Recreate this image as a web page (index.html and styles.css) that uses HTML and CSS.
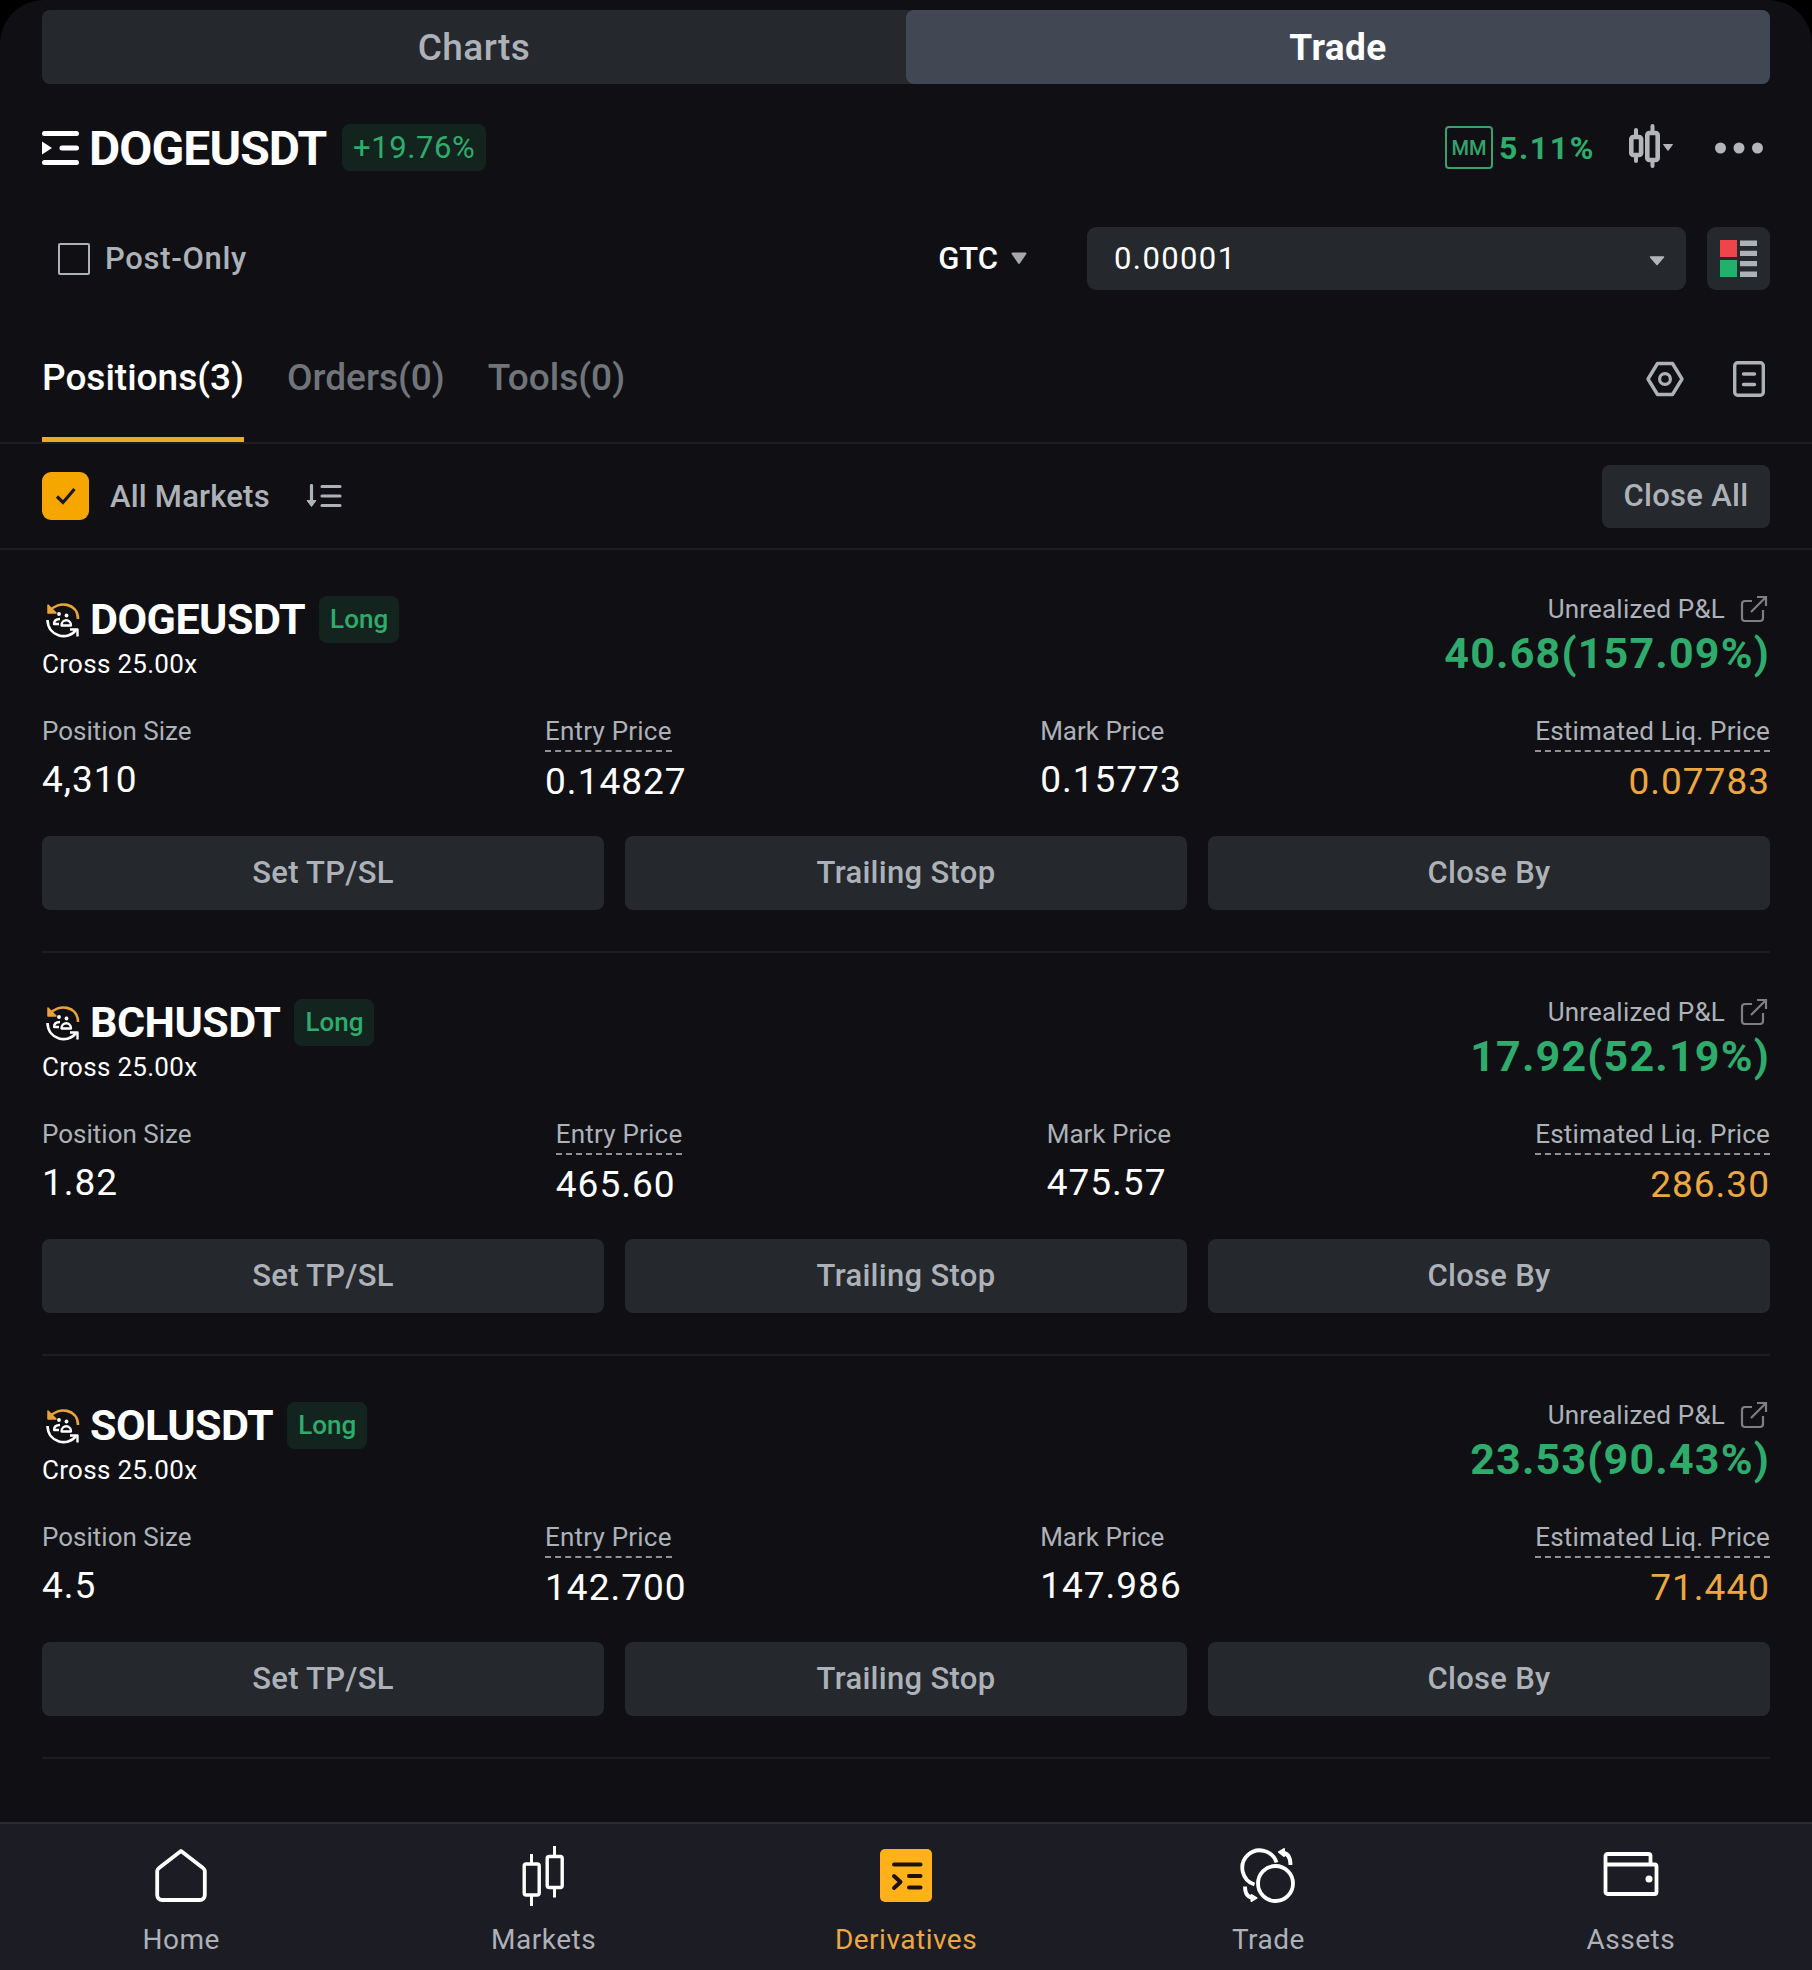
FILE: index.html
```html
<!DOCTYPE html>
<html lang="en">
<head>
  <meta charset="UTF-8">
  <meta name="viewport" content="width=device-width, initial-scale=1.0">
  <title>Derivatives</title>
  <link rel="stylesheet" href="styles.css">
</head>
<body>

<!-- Shared icons -->
<svg class="sprite">
  <symbol id="icon-cross" viewBox="0 0 34 36">
    <path d="M4 9C12-2 32 1 32 17" fill="none" stroke="#e8a33d" stroke-width="2.6"/>
    <path d="M2 3v8h8z" fill="#e8a33d" stroke="#e8a33d" stroke-width="1.5" stroke-linejoin="round"/>
    <path d="M1.500 18C2 35 22 39 30 28" fill="none" stroke="#fff" stroke-width="2.600"/>
    <path d="M24 27.500h7.500v7" fill="none" stroke="#fff" stroke-width="2.400" stroke-linejoin="round"/>
    <circle cx="13" cy="12" r="1.900" fill="#fff"/>
    <circle cx="20.500" cy="13.500" r="1.900" fill="#fff"/>
    <path d="M14 17c-4 0-6 2-6 5h5M15.500 23.500c0-7 9.500-7 9.500 0z" fill="none" stroke="#fff" stroke-width="2.300" stroke-linejoin="round"/>
  </symbol>
  <symbol id="icon-share" viewBox="0 0 28 28">
    <path d="M12 6H5a3 3 0 0 0-3 3v14a3 3 0 0 0 3 3h15a3 3 0 0 0 3-3v-8M11 17L26 2M17 2h9v9" fill="none" stroke="#7d7f83" stroke-width="2.200"/>
  </symbol>
</svg>

<div class="app">
  <div class="view-switch">
    <div class="view">Charts</div>
    <div class="view active">Trade</div>
  </div>

  <!-- Symbol header -->
  <div class="symbol-bar">
    <svg class="menu-icon" viewBox="0 0 37 36" width="37" height="36">
      <path d="M2.500 3.500h32M20 18h14.500M2.500 32.500h32" stroke="#fff" stroke-width="5" stroke-linecap="round"/>
      <path d="M0 11.500l10 6.500-10 6.500z" fill="#fff"/>
    </svg>
    <div class="symbol">DOGEUSDT</div>
    <div class="change">+19.76%</div>
    <div class="symbol-tools">
      <div class="mm">MM</div>
      <div class="mm-rate">5.11%</div>
      <svg class="candles" viewBox="0 0 45 44" width="45" height="44">
        <path d="M7 6v7M7 31v6M23.500 2v7M23.500 36v6" stroke="#b3b5ba" stroke-width="4" stroke-linecap="round"/>
        <rect x="2.300" y="13" width="9.800" height="18" rx="2" fill="none" stroke="#b3b5ba" stroke-width="4.600"/>
        <rect x="18.300" y="9" width="10.400" height="27" rx="2" fill="none" stroke="#b3b5ba" stroke-width="4.600"/>
        <path d="M34.500 20.500h9l-4.500 6z" fill="#b3b5ba" stroke="#b3b5ba" stroke-linejoin="round"/>
      </svg>
      <svg viewBox="0 0 48 12" width="48" height="12">
        <circle cx="5.500" cy="6" r="5.500" fill="#b3b5ba"/>
        <circle cx="24" cy="6" r="5.500" fill="#b3b5ba"/>
        <circle cx="42.500" cy="6" r="5.500" fill="#b3b5ba"/>
      </svg>
    </div>
  </div>

  <!-- Order options -->
  <div class="order-bar">
    <div class="box"></div>
    <div class="post-only">Post-Only</div>
    <div class="gtc">GTC</div>
    <svg class="gtc-caret" viewBox="0 0 16 13" width="16" height="13"><path d="M1.500 1.500h13L8 11z" fill="#a5a7ab" stroke="#a5a7ab" stroke-width="2" stroke-linejoin="round"/></svg>
    <div class="step">
      <span>0.00001</span>
      <svg viewBox="0 0 16 10" width="16" height="10"><path d="M1.500 1h13L8 8.500z" fill="#b3b5ba" stroke="#b3b5ba" stroke-width="1.500" stroke-linejoin="round"/></svg>
    </div>
    <div class="book">
      <svg viewBox="0 0 37 37" width="37" height="37">
        <path d="M0 0h17v17H0z" fill="#ef454a"/>
        <path d="M0 20h17v17H0z" fill="#20b26c"/>
        <path d="M20 .5h17V6H20zM20 10.800h17V16H20zM20 21h17v5.300H20zM20 31.500h17V37H20z" fill="#adb1b8"/>
      </svg>
    </div>
  </div>

  <!-- Tabs -->
  <div class="tabs">
    <div class="tab active">Positions(3)</div>
    <div class="tab">Orders(0)</div>
    <div class="tab">Tools(0)</div>
    <svg class="hex-icon" viewBox="0 0 38 36" width="38" height="36">
      <path d="M11.500 2.500h15L36 18l-9.500 15.500h-15L2 18z" fill="none" stroke="#adb1b8" stroke-width="3.400" stroke-linejoin="round"/>
      <circle cx="19" cy="18" r="5.400" fill="none" stroke="#adb1b8" stroke-width="3.200"/>
    </svg>
    <svg class="doc-icon" viewBox="0 0 32 36" width="32" height="36">
      <rect x="1.700" y="1.700" width="28.600" height="32.600" rx="3" fill="none" stroke="#adb1b8" stroke-width="3.400"/>
      <path d="M10.500 13h11M10.500 23.500h11" stroke="#adb1b8" stroke-width="3.400" stroke-linecap="round"/>
    </svg>
  </div>

  <!-- Filter -->
  <div class="filter">
    <div class="check">
      <svg viewBox="0 0 22 18" width="22" height="18"><path d="M2 9.500l6 6L19.500 2" fill="none" stroke="#191a1f" stroke-width="3.200"/></svg>
    </div>
    <div class="all-markets">All Markets</div>
    <svg class="sort-icon" viewBox="0 0 36 24" width="36" height="24">
      <path d="M5.500 1.500V20M16 2.500h18M16 12h18M16 21.500h18" stroke="#adb1b8" stroke-width="3.200" stroke-linecap="round"/>
      <path d="M1 16.500h9l-4.500 6z" fill="#adb1b8" stroke="#adb1b8" stroke-linejoin="round"/>
    </svg>
    <button class="close-all">Close All</button>
  </div>

  <!-- Positions -->
  <div class="position">
    <div class="position-head">
      <div>
        <div class="name">
          <svg width="34" height="36"><use href="#icon-cross"/></svg>
          <span class="pair">DOGEUSDT</span>
          <span class="side">Long</span>
        </div>
        <div class="leverage">Cross 25.00x</div>
      </div>
      <div class="pnl">
        <div class="pnl-label">Unrealized P&amp;L <svg width="28" height="28"><use href="#icon-share"/></svg></div>
        <div class="pnl-value">40.68(157.09%)</div>
      </div>
    </div>
    <div class="stats">
      <div><div class="label">Position Size</div><div class="value">4,310</div></div>
      <div><div class="label hint">Entry Price</div><div class="value">0.14827</div></div>
      <div><div class="label">Mark Price</div><div class="value">0.15773</div></div>
      <div class="liq"><div class="label hint">Estimated Liq. Price</div><div class="value">0.07783</div></div>
    </div>
    <div class="actions">
      <button>Set TP/SL</button>
      <button>Trailing Stop</button>
      <button>Close By</button>
    </div>
  </div>

  <div class="position">
    <div class="position-head">
      <div>
        <div class="name">
          <svg width="34" height="36"><use href="#icon-cross"/></svg>
          <span class="pair">BCHUSDT</span>
          <span class="side">Long</span>
        </div>
        <div class="leverage">Cross 25.00x</div>
      </div>
      <div class="pnl">
        <div class="pnl-label">Unrealized P&amp;L <svg width="28" height="28"><use href="#icon-share"/></svg></div>
        <div class="pnl-value">17.92(52.19%)</div>
      </div>
    </div>
    <div class="stats">
      <div><div class="label">Position Size</div><div class="value">1.82</div></div>
      <div><div class="label hint">Entry Price</div><div class="value">465.60</div></div>
      <div><div class="label">Mark Price</div><div class="value">475.57</div></div>
      <div class="liq"><div class="label hint">Estimated Liq. Price</div><div class="value">286.30</div></div>
    </div>
    <div class="actions">
      <button>Set TP/SL</button>
      <button>Trailing Stop</button>
      <button>Close By</button>
    </div>
  </div>

  <div class="position">
    <div class="position-head">
      <div>
        <div class="name">
          <svg width="34" height="36"><use href="#icon-cross"/></svg>
          <span class="pair">SOLUSDT</span>
          <span class="side">Long</span>
        </div>
        <div class="leverage">Cross 25.00x</div>
      </div>
      <div class="pnl">
        <div class="pnl-label">Unrealized P&amp;L <svg width="28" height="28"><use href="#icon-share"/></svg></div>
        <div class="pnl-value">23.53(90.43%)</div>
      </div>
    </div>
    <div class="stats">
      <div><div class="label">Position Size</div><div class="value">4.5</div></div>
      <div><div class="label hint">Entry Price</div><div class="value">142.700</div></div>
      <div><div class="label">Mark Price</div><div class="value">147.986</div></div>
      <div class="liq"><div class="label hint">Estimated Liq. Price</div><div class="value">71.440</div></div>
    </div>
    <div class="actions">
      <button>Set TP/SL</button>
      <button>Trailing Stop</button>
      <button>Close By</button>
    </div>
  </div>

  <!-- Bottom navigation -->
  <div class="nav">
    <div class="nav-item">
      <svg viewBox="0 0 56 64" width="56" height="64">
        <path d="M28 8L6 25a4 4 0 0 0-1.800 3v24a5 5 0 0 0 5 5h37.600a5 5 0 0 0 5-5V28a4 4 0 0 0-1.800-3z" fill="none" stroke="#fff" stroke-width="3.800" stroke-linejoin="round"/>
      </svg>
      <span>Home</span>
    </div>
    <div class="nav-item">
      <svg viewBox="0 0 56 64" width="56" height="64">
        <path d="M15.500 11v9M15.500 53v10M38.500 3v10M38.500 45v9.500" stroke="#fff" stroke-width="3"/>
        <rect x="8.200" y="21" width="15" height="31" rx="2" fill="none" stroke="#fff" stroke-width="3.400"/>
        <rect x="31.200" y="13.500" width="15" height="31" rx="2" fill="none" stroke="#fff" stroke-width="3.400"/>
      </svg>
      <span>Markets</span>
    </div>
    <div class="nav-item active">
      <svg viewBox="0 0 56 64" width="56" height="64">
        <rect x="2" y="6" width="52" height="53" rx="5" fill="#ffb11a"/>
        <path d="M16 21.500h26.500M31 33h11.500M31 44.500h11.500M16 33l6.500 6-6.500 6" fill="none" stroke="#1c1208" stroke-width="4" stroke-linecap="round" stroke-linejoin="round"/>
      </svg>
      <span>Derivatives</span>
    </div>
    <div class="nav-item">
      <svg viewBox="0 0 56 64" width="56" height="64">
        <circle cx="35.500" cy="40.500" r="17.500" fill="none" stroke="#fff" stroke-width="3.800"/>
        <path d="M36.500 19.500A17.500 17.500 0 1 0 14.500 41.500" fill="none" stroke="#fff" stroke-width="3.800"/>
        <path d="M41 9.500c6 0 9.500 4 9.500 12.500M5 43.500c0 8 3.500 11.500 9.500 11.500" fill="none" stroke="#fff" stroke-width="3.800"/>
        <path d="M39 9l5-3v7zM16.500 55l-5 3 0-6z" fill="#fff" stroke="#fff" stroke-width="2" stroke-linejoin="round"/>
      </svg>
      <span>Trade</span>
    </div>
    <div class="nav-item">
      <svg viewBox="0 0 56 64" width="56" height="64">
        <path d="M2.500 21.500V13a2 2 0 0 1 2-2h41a2 2 0 0 1 2 2v8.500M2.500 21.500h49a2 2 0 0 1 2 2V49a2 2 0 0 1-2 2h-47a2 2 0 0 1-2-2z" fill="none" stroke="#fff" stroke-width="3.800"/>
        <circle cx="46" cy="36" r="3.500" fill="#fff"/>
      </svg>
      <span>Assets</span>
    </div>
  </div>
</div>

</body>
</html>
```
FILE: styles.css
```css
* {
  box-sizing: border-box;
}

body {
  margin: 0;
  background-color: #000;
  color: #fff;
  font-family: Roboto, "Liberation Sans", sans-serif;
}

button {
  border: none;
  border-radius: 8px;
  background-color: #25282c;
  color: #adb1b8;
  font-family: inherit;
  font-size: 31px;
  font-weight: 500;
  letter-spacing: 0.3px;
  padding: 0 0 2px;
}

svg {
  display: block;
  flex: none;
}

.sprite {
  position: absolute;
  width: 0;
  height: 0;
}

.app {
  display: flex;
  flex-direction: column;
  height: 1970px;
  padding-top: 10px;
  background-color: #101014;
  border-radius: 44px 44px 0 0;
  white-space: nowrap;
}

.view-switch {
  display: flex;
  height: 74px;
  margin: 0 42px;
  border-radius: 8px;
  background-color: #25282c;
}

.view {
  flex: 1;
  border-radius: 8px;
  color: #adb1b8;
  font-size: 37px;
  font-weight: 500;
  line-height: 75px;
  text-align: center;
  letter-spacing: 0.4px;
}

.view.active {
  background-color: #414854;
  color: #fff;
  font-weight: 700;
}

.symbol-bar {
  display: flex;
  align-items: center;
  height: 127px;
  padding: 0 49px 0 42px;
}

.symbol {
  width: 240px;
  margin-left: 10px;
  padding-top: 2px;
  font-size: 48px;
  font-weight: 700;
  letter-spacing: -0.9px;
}

.change {
  height: 47px;
  margin-left: 13px;
  padding: 0 11px;
  border-radius: 8px;
  background-color: #13241f;
  color: #2fac6c;
  font-size: 31px;
  line-height: 47px;
  letter-spacing: 0.6px;
}

.symbol-tools {
  display: flex;
  align-items: center;
  margin-left: auto;
}

.mm {
  width: 48px;
  height: 43px;
  border: 2px solid #35a46c;
  border-radius: 4px;
  color: #35a46c;
  font-size: 20px;
  font-weight: 500;
  line-height: 41px;
  text-align: center;
}

.mm-rate {
  margin-left: 6px;
  color: #2fac6c;
  font-size: 32px;
  font-weight: 700;
  letter-spacing: 1.6px;
}

.candles {
  margin: -4px 41px 0 34px;
}

.order-bar {
  display: flex;
  align-items: center;
  height: 63px;
  margin: 16px 42px 0 58px;
}

.box {
  width: 32px;
  height: 32px;
  border: 2px solid #adb1b8;
  border-radius: 2px;
}

.post-only {
  margin-left: 15px;
  color: #adb1b8;
  font-size: 31px;
  font-weight: 500;
  letter-spacing: 0.7px;
}

.gtc {
  margin-left: auto;
  font-size: 31px;
  font-weight: 500;
}

.gtc-caret {
  margin-left: 13px;
}

.step {
  display: flex;
  align-items: center;
  justify-content: space-between;
  width: 599px;
  height: 63px;
  margin: 0 21px 0 60px;
  padding: 0 21px 0 27px;
  border-radius: 9px;
  background-color: #25282c;
  font-size: 31px;
  letter-spacing: 1.4px;
}

.step svg {
  margin-top: 5px;
}

.book {
  width: 63px;
  height: 63px;
  padding: 13px;
  border-radius: 9px;
  background-color: #25282c;
}

.tabs {
  display: flex;
  height: 154px;
  padding: 0 47px 0 42px;
  border-bottom: 2px solid #1c1d21;
}

.tab {
  margin-right: 43px;
  padding-top: 66px;
  color: #71757a;
  font-size: 37px;
  font-weight: 500;
  line-height: 44px;
}

.tab.active {
  border-bottom: 5px solid #eba933;
  color: #fff;
}

.hex-icon {
  margin: 71px 49px 0 auto;
}

.doc-icon {
  margin-top: 71px;
}

.filter {
  display: flex;
  align-items: center;
  height: 106px;
  padding: 0 42px;
  border-bottom: 2px solid #1c1d21;
}

.check {
  display: flex;
  align-items: center;
  justify-content: center;
  width: 47px;
  height: 48px;
  border-radius: 9px;
  background-color: #f7a600;
}

.all-markets {
  margin-left: 21px;
  color: #adb1b8;
  font-size: 31px;
  font-weight: 500;
  letter-spacing: 0.2px;
}

.sort-icon {
  margin-left: 36px;
}

.close-all {
  width: 168px;
  height: 63px;
  margin-left: auto;
}

.position {
  height: 403px;
  margin: 0 42px;
  padding-top: 46px;
  border-bottom: 2px solid #1c1d21;
}

.position-head {
  display: flex;
  justify-content: space-between;
  height: 120px;
}

.name {
  display: flex;
  align-items: center;
  height: 47px;
  padding-left: 4px;
}

.pair {
  margin: -2px 0 0 10px;
  font-size: 43px;
  font-weight: 700;
  letter-spacing: -0.5px;
}

.side {
  height: 47px;
  margin-left: 14px;
  padding: 0 11px;
  border-radius: 8px;
  background-color: #13241f;
  color: #2fac6c;
  font-size: 26px;
  font-weight: 500;
  line-height: 47px;
}

.leverage {
  margin-top: 6px;
  font-size: 26px;
  line-height: 30px;
  letter-spacing: 0.3px;
}

.pnl-label {
  display: flex;
  align-items: center;
  justify-content: flex-end;
  height: 26px;
  padding-right: 2px;
  color: #adb1b8;
  font-size: 26px;
  letter-spacing: 0.2px;
}

.pnl-label svg {
  margin-left: 15px;
}

.pnl-value {
  margin-top: 6px;
  color: #2fac6c;
  font-size: 43px;
  font-weight: 700;
  line-height: 50px;
  text-align: right;
  letter-spacing: 1.2px;
}

.stats {
  display: flex;
  justify-content: space-between;
  height: 120px;
}

.label {
  color: #adb1b8;
  font-size: 26px;
  line-height: 30px;
}

.label.hint {
  width: fit-content;
  padding-bottom: 4px;
  border-bottom: 2px dashed #8f9195;
  letter-spacing: 0.2px;
}

.value {
  margin-top: 14px;
  font-size: 37px;
  line-height: 40px;
  letter-spacing: 1px;
}

.hint + .value {
  margin-top: 10px;
}

.liq .value {
  color: #eca741;
  text-align: right;
}

.actions {
  display: flex;
  gap: 21px;
}

.actions button {
  flex: 1;
  height: 74px;
}

.nav {
  display: flex;
  height: 148px;
  margin-top: auto;
  border-top: 2px solid #2b2b31;
  background-color: #1c1c24;
}

.nav-item {
  display: flex;
  flex: 1;
  flex-direction: column;
  align-items: center;
  padding-top: 19px;
  color: #adb1b8;
  font-size: 28px;
  letter-spacing: 0.5px;
}

.nav-item span {
  margin-top: 16px;
  line-height: 34px;
}

.nav-item.active {
  color: #eca741;
}
```
